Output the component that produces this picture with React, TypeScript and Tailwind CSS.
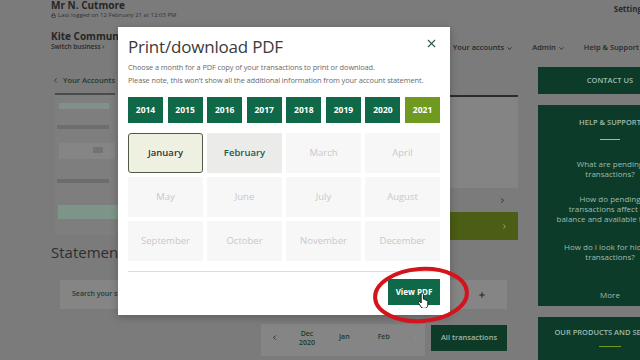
import React from "react"
import { X, ChevronDown, ChevronLeft, ChevronRight, Lock, Plus } from "lucide-react"

const years = ["2014", "2015", "2016", "2017", "2018", "2019", "2020", "2021"]
const months = [
  "January", "February", "March", "April",
  "May", "June", "July", "August",
  "September", "October", "November", "December",
]

function MonthCell({ name, index }: { name: string; index: number }) {
  if (index === 0) {
    return (
      <div className="h-[40px] rounded-[3px] border-[1.5px] border-[#4f5b42] bg-[#eef1e2] flex items-center justify-center text-[9.5px] font-semibold text-[#333]">
        {name}
      </div>
    )
  }
  if (index === 1) {
    return (
      <div className="h-[40px] bg-[#ebecea] flex items-center justify-center text-[9.5px] font-semibold text-[#1f5a45]">
        {name}
      </div>
    )
  }
  return (
    <div className="h-[40px] bg-[#f7f7f7] flex items-center justify-center text-[9.5px] text-[#c9c9c9]">
      {name}
    </div>
  )
}

function PrintModal() {
  return (
    <div className="absolute left-[118px] top-[27px] w-[332px] h-[288px] bg-white shadow-[0_2px_8px_rgba(0,0,0,0.25)] px-[10px] pt-[8px]">
      <div className="flex items-start justify-between">
        <h2 className="text-[17px] leading-[24px] text-[#3a3a3a] tracking-[-0.2px]">Print/download PDF</h2>
        <X className="w-[13px] h-[13px] mt-[2px] mr-[2px] text-[#2f5a4c]" strokeWidth={2} />
      </div>
      <p className="mt-[2px] text-[7.4px] leading-[13px] text-[#6a6a6a] tracking-[-0.1px]">
        Choose a month for a PDF copy of your transactions to print or download.
        <br />
        Please note, this won't show all the additional information from your account statement.
      </p>

      {/* Years */}
      <div className="mt-[10px] flex gap-[4.6px]">
        {years.map((y) => (
          <div
            key={y}
            className={`w-[35px] h-[26px] flex items-center justify-center text-[8.5px] font-bold text-white ${
              y === "2021" ? "bg-[#6f9a1f]" : "bg-[#0f6848]"
            }`}
          >
            {y}
          </div>
        ))}
      </div>

      {/* Months */}
      <div className="mt-[10px] grid grid-cols-4 gap-x-[4px] gap-y-[4px] w-[312px]">
        {months.map((m, i) => (
          <MonthCell key={m} name={m} index={i} />
        ))}
      </div>

      <div className="mt-[10px] h-px bg-[#dcdcdc] w-[312px]" />

      <div className="mt-[7px] flex justify-end w-[312px]">
        <div className="w-[52px] h-[26px] bg-[#0f6848] flex items-center justify-center text-[8px] font-bold text-white">
          View PDF
        </div>
      </div>
    </div>
  )
}

export default function App() {
  return (
    <div className="relative w-[640px] h-[360px] overflow-hidden bg-[#7b7b7b] font-['Open_Sans',sans-serif]">
      {/* Header */}
      <div className="flex justify-between pl-[51px] h-[27px]">
        <div>
          <p className="text-[10px] leading-[12px] font-bold text-[#262626] -mt-[1px]">Mr N. Cutmore</p>
          <p className="flex items-center gap-[2px] text-[6px] leading-[9px] text-[#333]">
            <Lock className="w-[5px] h-[5px]" strokeWidth={3} />
            Last logged on 12 February 21 at 12:03 PM
          </p>
        </div>
        <p className="text-[8px] font-bold text-[#2a2a2a] mt-[3px] -mr-[6px]">Settings</p>
      </div>

      {/* Business + nav */}
      <div className="flex justify-between pl-[51px] h-[33px]">
        <div className="pt-[3px]">
          <p className="text-[10px] leading-[12px] font-bold text-[#262626]">Kite Communications</p>
          <p className="text-[6.5px] leading-[9px] font-semibold text-[#2a2a2a]">Switch business ›</p>
        </div>
        <div className="flex gap-[19px] pt-[9px] text-[7.5px] font-semibold text-[#2a2a2a]">
          <span className="flex items-center gap-[2px]">Your accounts <ChevronDown className="w-[7px] h-[7px]" strokeWidth={3} /></span>
          <span className="flex items-center gap-[2px]">Admin <ChevronDown className="w-[7px] h-[7px]" strokeWidth={3} /></span>
          <span className="flex items-center gap-[2px] -mr-[8px]">Help &amp; Support <ChevronDown className="w-[7px] h-[7px]" strokeWidth={3} /></span>
        </div>
      </div>

      {/* Body */}
      <div className="flex pl-[51px]">
        <div className="w-[467px] shrink-0">
          <div className="flex">
            {/* Sidebar */}
            <div className="w-[67px] shrink-0 pt-[15px]">
              <p className="flex items-center gap-[4px] pl-[1px] text-[7.5px] leading-[10px] font-semibold text-[#203a2c]">
                <ChevronLeft className="w-[7px] h-[7px]" strokeWidth={3} /> Your Accounts
              </p>
              <div className="mt-[8px] ml-[4px] w-[60px] h-[2px] bg-[#4a4a4a]" />
              <div className="ml-[4px] w-[63px] h-[140px] flex flex-col bg-[#7e7e7e]">
                <div className="mt-[8px] ml-[4px] w-[50px] h-[6px] bg-[#83908a]" />
                <div className="mt-[16px] ml-[2px] w-[52px] h-[4px] bg-[#6e6e6e]" />
                <div className="mt-[14px] ml-[4px] w-[56px] h-[16px] bg-[#858585] flex justify-end pr-[12px] pt-[4px]">
                  <div className="w-[10px] h-[6px] bg-[#737373]" />
                </div>
                <div className="mt-[20px] ml-[2px] w-[52px] h-[4px] bg-[#6c6c6c]" />
                <div className="mt-[22px] ml-[3px] w-[60px] h-[14px] bg-[#7d9588]" />
              </div>
            </div>
            {/* Main card */}
            <div className="flex-1 pt-[35px]">
              <div className="h-[2px] bg-[#2b2b2b]" />
              <div className="h-[91px] bg-[#848484]" />
              <div className="h-[24px] flex items-center justify-end pr-[12px] text-[#1f1f1f]">
                <ChevronRight className="w-[7px] h-[7px]" strokeWidth={3} />
              </div>
              <div className="h-[28px] bg-[#4c5d15] flex items-center justify-end pr-[10px] text-[#a8b87a]">
                <ChevronRight className="w-[7px] h-[7px]" strokeWidth={3} />
              </div>
            </div>
          </div>

          {/* Statement */}
          <p className="mt-[2px] text-[15px] leading-[20px] text-[#2e2e2e]">Statements</p>
          <div className="mt-[18px] ml-[9px] w-[447px] h-[29px] bg-[#858585] flex items-center justify-between px-[12px]">
            <span className="text-[7px] font-semibold text-[#1f3d2e]">Search your statement</span>
            <Plus className="w-[8px] h-[8px] mr-[9px] text-[#222]" strokeWidth={3} />
          </div>
          <div className="mt-[16px] flex justify-end items-start gap-[6px] pr-[11px]">
            <div className="w-[164px] h-[32px] -mt-[1px] bg-[#858585] flex items-center pb-[5px] text-[7px] font-semibold text-[#1d3a2c]">
              <ChevronLeft className="ml-[10px] w-[7px] h-[7px] text-[#222]" strokeWidth={3} />
              <span className="ml-[21px] text-center leading-[9px]">Dec<br />2020</span>
              <span className="ml-[24px]">Jan</span>
              <span className="ml-[28px]">Feb</span>
              <ChevronRight className="ml-[22px] w-[7px] h-[7px] text-[#8e8e8e]" strokeWidth={3} />
            </div>
            <div className="w-[76px] h-[26px] bg-[#0d3b28] flex items-center justify-center text-[7.5px] font-semibold text-[#9fb8aa]">
              All transactions
            </div>
          </div>
        </div>

        {/* Right column */}
        <div className="ml-[20px] w-[144px] shrink-0 pt-[7px] flex flex-col gap-[11px] text-[#9fbbae]">
          <div className="h-[27px] bg-[#0c3b29] flex items-center justify-center text-[7.5px] font-semibold">
            CONTACT US
          </div>
          <div className="h-[201px] bg-[#0c3b29] flex flex-col items-center pt-[12px] text-[8px] text-center leading-[10px] whitespace-nowrap">
            <p className="font-semibold text-[7.5px]">HELP &amp; SUPPORT</p>
            <div className="mt-[12px] w-[20px] h-[1px] bg-[#9fbbae]" />
            <p className="mt-[19px]">What are pending<br />transactions?</p>
            <p className="mt-[15px]">How do pending<br />transactions affect my<br />balance and available funds?</p>
            <p className="mt-[18px]">How do I look for hidden<br />transactions?</p>
            <p className="mt-[28px]">More</p>
          </div>
          <div className="h-[50px] bg-[#0c3b29] flex flex-col items-center pt-[10px] text-[7.5px] font-semibold whitespace-nowrap">
            <p>OUR PRODUCTS AND SERVICES</p>
            <div className="mt-[8px] w-[22px] h-[1px] bg-[#6f9a1f]" />
          </div>
        </div>
      </div>

      <PrintModal />

      {/* Annotation ring */}
      <svg className="absolute left-[370px] top-[264px]" width="104" height="64" viewBox="0 0 104 64">
        <ellipse cx="51" cy="31" rx="46" ry="26" fill="none" stroke="#d4141c" strokeWidth="4" transform="rotate(-4 51 31)" />
      </svg>

      {/* Cursor */}
      <svg className="absolute left-[418px] top-[293px]" width="12" height="15" viewBox="0 0 12 15">
        <path
          d="M3.2 1.2c0-.7.5-1.1 1.1-1.1s1.1.4 1.1 1.1v5l.3-.1c.6-.2 1.2.1 1.3.7l.1.2c.6-.3 1.2 0 1.4.6.6-.2 1.2.1 1.3.8v3.6c0 1.8-1.3 3.3-3.1 3.3H5.4c-1 0-1.8-.5-2.4-1.3L.7 10.2c-.4-.5-.3-1.2.2-1.5.5-.3 1.1-.2 1.4.2l.9 1.1V1.2z"
          fill="#fff"
          stroke="#111"
          strokeWidth="0.9"
        />
      </svg>
    </div>
  )
}
